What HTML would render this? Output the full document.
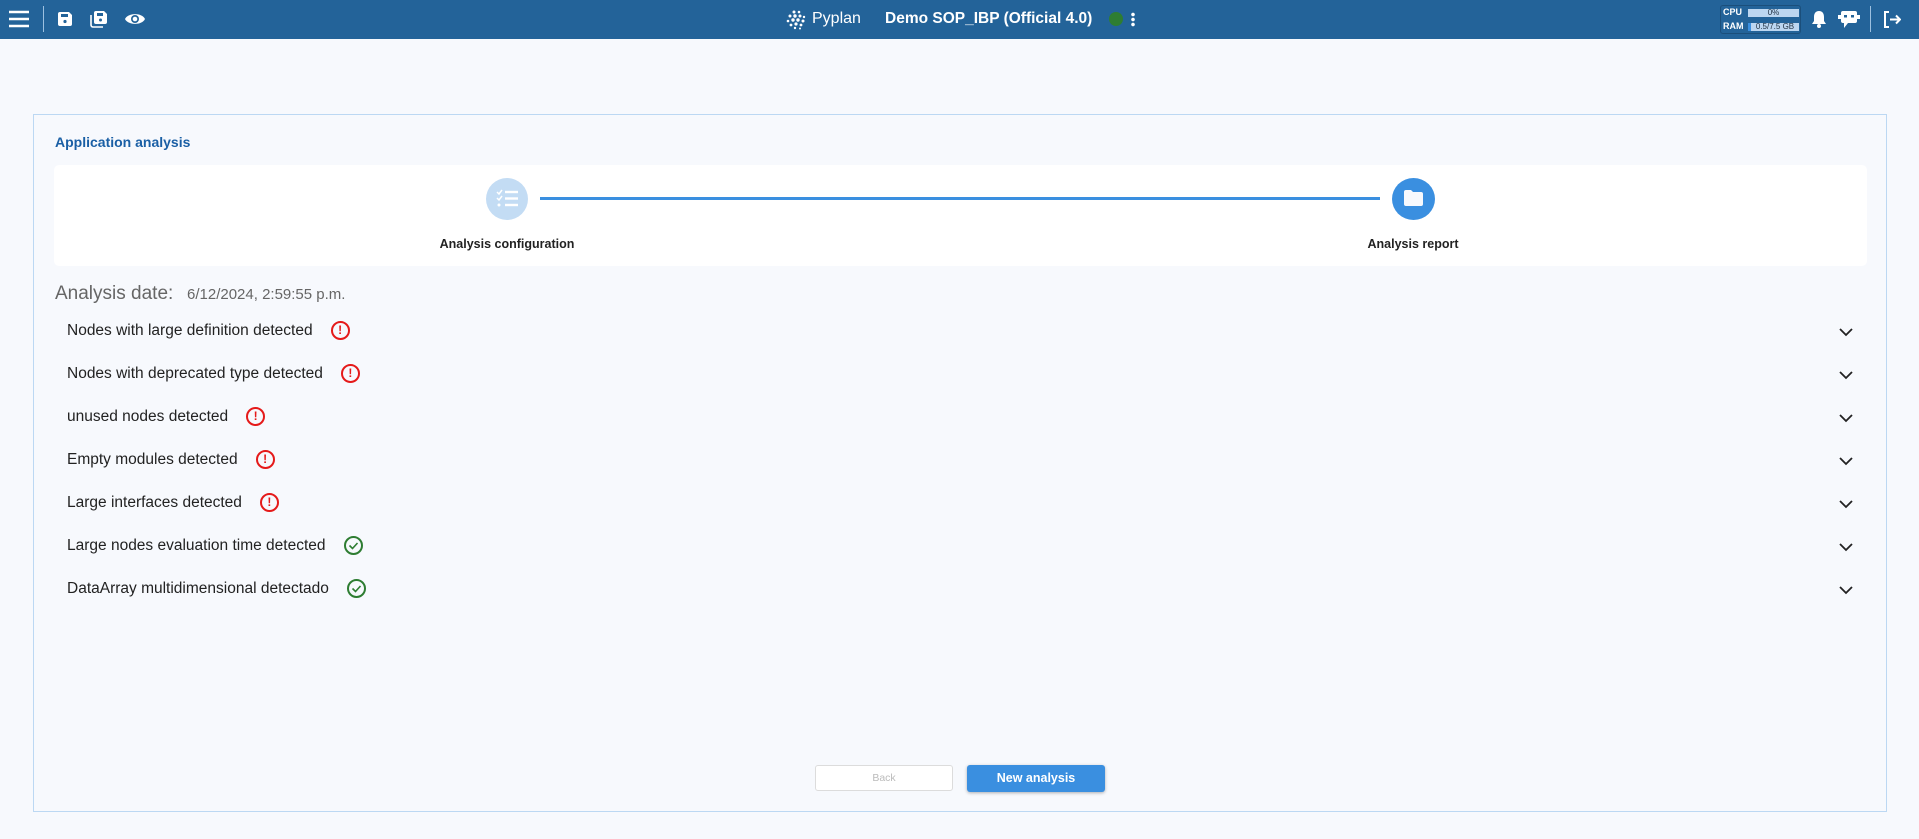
<!DOCTYPE html>
<html><head><meta charset="utf-8"><style>
*{box-sizing:border-box;margin:0;padding:0}
body{width:1919px;height:839px;background:#f7f9fd;font-family:"Liberation Sans",Arial,sans-serif;position:relative;overflow:hidden}
.hdr{position:absolute;left:0;top:0;width:1919px;height:39px;background:#236399;color:#fff}
.a{position:absolute}
.panel{position:absolute;left:33px;top:114px;width:1854px;height:698px;border:1px solid #bcd8f3;background:#f7f9fd}
.row{position:absolute;left:67px;font-size:15.5px;color:#222;display:flex;align-items:center}
.ic{display:inline-block;width:19px;height:19px;border-radius:50%;margin-left:18px;position:relative}
.err{border:2px solid #e51a1a;color:#e51a1a;font-weight:bold;font-size:12px;line-height:15px;text-align:center}
.ok{border:2px solid #2e7d32}
.chev{position:absolute;left:1838px;width:16px;height:16px}
</style></head><body>
<div class="hdr">
 <svg class="a" style="left:9px;top:10px" width="20" height="18"><g stroke="#fff" stroke-width="2.4"><line x1="0" y1="2" x2="20" y2="2"/><line x1="0" y1="9" x2="20" y2="9"/><line x1="0" y1="16" x2="20" y2="16"/></g></svg>
 <div class="a" style="left:43px;top:6px;width:1px;height:26px;background:#9cc0e0"></div>
 <svg class="a" style="left:57px;top:11px" width="16" height="16"><path d="M1 3a2 2 0 0 1 2-2h9l3 3v9a2 2 0 0 1-2 2H3a2 2 0 0 1-2-2z" fill="#fff"/><rect x="4" y="3" width="7" height="3" fill="#236399"/><circle cx="8" cy="10.5" r="1.6" fill="#236399"/></svg>
 <svg class="a" style="left:90px;top:10px" width="18" height="18"><path d="M1 5v10a2 2 0 0 0 2 2h10" stroke="#fff" stroke-width="1.6" fill="none"/><path d="M4 3a2 2 0 0 1 2-2h8l3 3v8a2 2 0 0 1-2 2H6a2 2 0 0 1-2-2z" fill="#fff"/><rect x="7" y="3" width="6" height="3" fill="#236399"/><circle cx="10.5" cy="10" r="1.5" fill="#236399"/></svg>
 <svg class="a" style="left:125px;top:11px" width="20" height="16"><path d="M0 8C3 1.5 17 1.5 20 8C17 14.5 3 14.5 0 8z" fill="#fff"/><circle cx="10" cy="8" r="4" fill="#236399"/><circle cx="10" cy="8" r="2.3" fill="#fff"/></svg>
 <svg class="a" style="left:786px;top:10px" width="22" height="20"><g fill="#fff"><circle cx="8" cy="2" r="1.5"/><circle cx="13" cy="2" r="1.3"/><circle cx="4" cy="6" r="1.5"/><circle cx="9" cy="6" r="1.7"/><circle cx="14" cy="6" r="1.5"/><circle cx="18" cy="7" r="1.2"/><circle cx="2" cy="11" r="1.3"/><circle cx="7" cy="10" r="1.7"/><circle cx="12" cy="10" r="1.7"/><circle cx="17" cy="11" r="1.5"/><circle cx="5" cy="15" r="1.4"/><circle cx="10" cy="14" r="1.6"/><circle cx="15" cy="15" r="1.4"/><circle cx="9" cy="18" r="1.2"/><circle cx="14" cy="18.5" r="1"/></g></svg>
 <div class="a" style="left:812px;top:10px;font-size:16px">Pyplan</div>
 <div class="a" style="left:885px;top:10px;font-size:15.5px;font-weight:bold">Demo SOP_IBP (Official 4.0)</div>
 <div class="a" style="left:1109px;top:12px;width:14px;height:14px;border-radius:50%;background:#2e7d32"></div>
 <div class="a" style="left:1131px;top:12px;width:4px;height:15px;background:radial-gradient(circle,#fff 1.6px,transparent 2px) 0 0/4px 5px"></div>
 <div class="a" style="left:1720px;top:5px;width:81px;height:29px;border:1px solid #1b4f7b;border-radius:3px"></div>
 <div class="a" style="left:1723px;top:7px;font-size:9px;font-weight:bold">CPU</div>
 <div class="a" style="left:1723px;top:21px;font-size:9px;font-weight:bold">RAM</div>
 <div class="a" style="left:1748px;top:9px;width:51px;height:8px;background:#bcd6f0;color:#234;font-size:8px;text-align:center;line-height:8px">0%</div>
 <div class="a" style="left:1748px;top:23px;width:51px;height:8px;background:#bcd6f0;color:#234;font-size:8px;text-align:center;line-height:8px;border-left:3px solid #3a8fe0">0.5/7.5 GB</div>
 <svg class="a" style="left:1811px;top:10px" width="16" height="18"><path d="M8 1c-3.5 0-5 2.5-5 6v4l-2 3h14l-2-3V7c0-3.5-1.5-6-5-6z" fill="#fff"/><circle cx="8" cy="16" r="2" fill="#fff"/></svg>
 <svg class="a" style="left:1838px;top:10px" width="22" height="20"><rect x="3" y="1" width="16" height="12" rx="2" fill="#fff"/><rect x="0" y="5" width="3" height="4" fill="#fff"/><rect x="19" y="5" width="3" height="4" fill="#fff"/><path d="M6 13l0 5l4-5z" fill="#fff"/><rect x="6" y="5" width="3" height="2.5" fill="#236399"/><rect x="13" y="5" width="3" height="2.5" fill="#236399"/></svg>
 <div class="a" style="left:1870px;top:6px;width:1px;height:26px;background:#9cc0e0"></div>
 <svg class="a" style="left:1883px;top:11px" width="18" height="17"><path d="M6 1H2v15h4" stroke="#fff" stroke-width="2" fill="none"/><path d="M7 8.5h10M13 4.5l4 4-4 4" stroke="#fff" stroke-width="2" fill="none"/></svg>
</div>
<div class="panel"></div>
<div class="a" style="left:55px;top:134px;font-size:14px;font-weight:bold;color:#1a5fa5">Application analysis</div>
<div class="a" style="left:54px;top:165px;width:1813px;height:101px;background:#fff;border-radius:5px"></div>
<div class="a" style="left:540px;top:197px;width:840px;height:3px;background:#3a8fe0"></div>
<div class="a" style="left:486px;top:178px;width:42px;height:42px;border-radius:50%;background:#c3dcf4"></div>
<svg class="a" style="left:496px;top:189px" width="24" height="20"><path d="M1 3l2 2 3-4M1 9l2 2 3-4" stroke="#fff" stroke-width="1.5" fill="none"/><circle cx="3" cy="16" r="1.5" fill="#fff"/><g stroke="#fff" stroke-width="2.4"><line x1="9" y1="3" x2="22" y2="3"/><line x1="9" y1="9.5" x2="22" y2="9.5"/><line x1="9" y1="16" x2="22" y2="16"/></g></svg>
<div class="a" style="left:1392px;top:178px;width:43px;height:42px;border-radius:50%;background:#3a8fe0"></div>
<svg class="a" style="left:1403px;top:189px" width="21" height="19"><path d="M1 3a2 2 0 0 1 2-2h5l2 2h8a2 2 0 0 1 2 2v10a2 2 0 0 1-2 2H3a2 2 0 0 1-2-2z" fill="#f7f9fd"/></svg>
<div class="a" style="left:420px;top:237px;width:174px;text-align:center;font-size:12.5px;font-weight:bold;color:#222">Analysis configuration</div>
<div class="a" style="left:1333px;top:237px;width:160px;text-align:center;font-size:12.5px;font-weight:bold;color:#222">Analysis report</div>
<div class="a" style="left:55px;top:283px;font-size:19px;color:#666">Analysis date:</div>
<div class="a" style="left:187px;top:286px;font-size:15px;color:#666">6/12/2024, 2:59:55 p.m.</div>
<div class="row" style="top:321px">Nodes with large definition detected<span class="ic err">!</span></div>
<div class="row" style="top:364px">Nodes with deprecated type detected<span class="ic err">!</span></div>
<div class="row" style="top:407px">unused nodes detected<span class="ic err">!</span></div>
<div class="row" style="top:450px">Empty modules detected<span class="ic err">!</span></div>
<div class="row" style="top:493px">Large interfaces detected<span class="ic err">!</span></div>
<div class="row" style="top:536px">Large nodes evaluation time detected<span class="ic ok"><svg width="15" height="15" style="position:absolute;left:0;top:0"><path d="M3.5 7.5l3 3 5-5.5" stroke="#2e7d32" stroke-width="1.6" fill="none"/></svg></span></div>
<div class="row" style="top:579px">DataArray multidimensional detectado<span class="ic ok"><svg width="15" height="15" style="position:absolute;left:0;top:0"><path d="M3.5 7.5l3 3 5-5.5" stroke="#2e7d32" stroke-width="1.6" fill="none"/></svg></span></div>
<svg class="chev" style="top:324px"><path d="M2 5l6 6 6-6" stroke="#222" stroke-width="1.8" fill="none"/></svg>
<svg class="chev" style="top:367px"><path d="M2 5l6 6 6-6" stroke="#222" stroke-width="1.8" fill="none"/></svg>
<svg class="chev" style="top:410px"><path d="M2 5l6 6 6-6" stroke="#222" stroke-width="1.8" fill="none"/></svg>
<svg class="chev" style="top:453px"><path d="M2 5l6 6 6-6" stroke="#222" stroke-width="1.8" fill="none"/></svg>
<svg class="chev" style="top:496px"><path d="M2 5l6 6 6-6" stroke="#222" stroke-width="1.8" fill="none"/></svg>
<svg class="chev" style="top:539px"><path d="M2 5l6 6 6-6" stroke="#222" stroke-width="1.8" fill="none"/></svg>
<svg class="chev" style="top:582px"><path d="M2 5l6 6 6-6" stroke="#222" stroke-width="1.8" fill="none"/></svg>
<div class="a" style="left:815px;top:765px;width:138px;height:26px;border:1px solid #dcdcdc;border-radius:3px;background:#fff;color:#bbb;font-size:10.5px;text-align:center;line-height:24px">Back</div>
<div class="a" style="left:967px;top:765px;width:138px;height:27px;border-radius:3px;background:#3a8fe0;color:#fff;font-size:12.5px;font-weight:bold;text-align:center;line-height:27px;box-shadow:0 1px 3px rgba(0,0,0,.3)">New analysis</div>
</body></html>
